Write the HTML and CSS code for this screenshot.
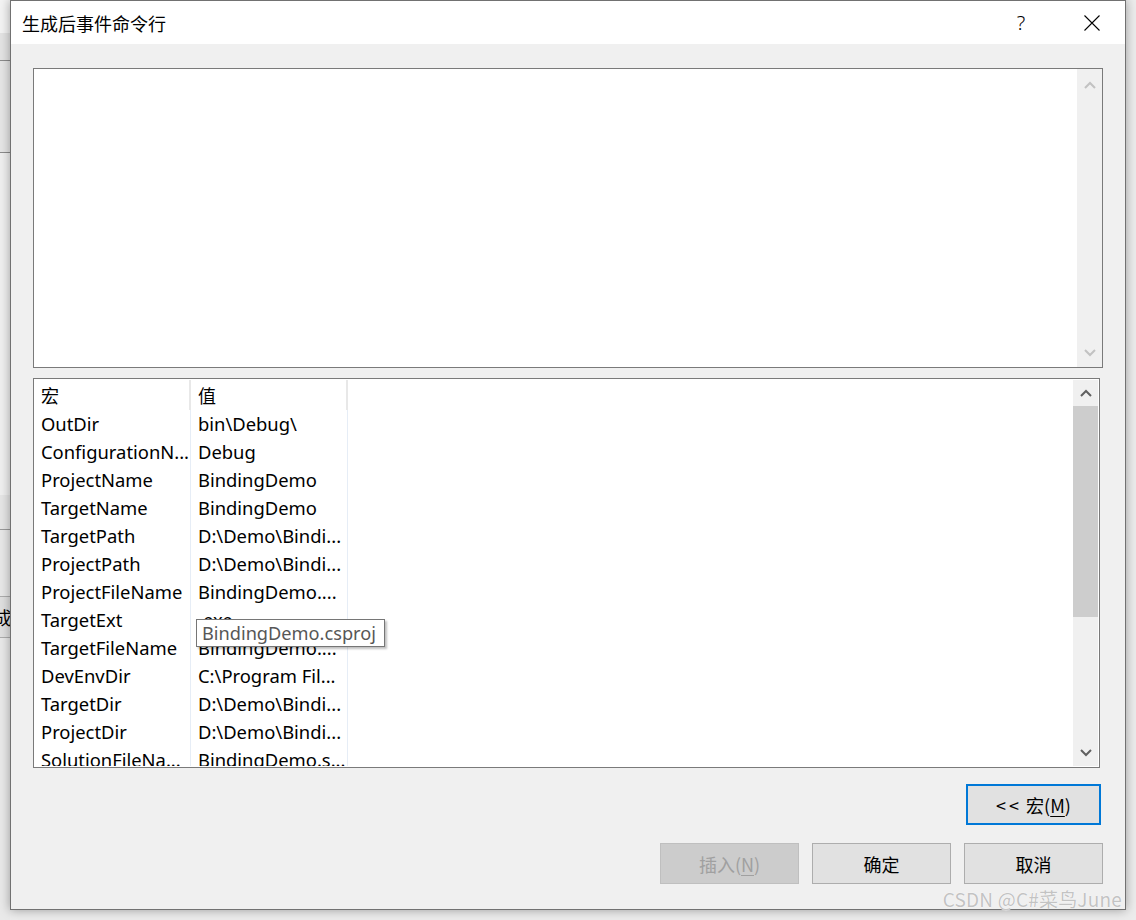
FILE: index.html
```html
<!DOCTYPE html>
<html>
<head>
<meta charset="utf-8">
<title>生成后事件命令行</title>
<link rel="stylesheet" href="styles.css">
</head>
<body>
<div class="screen">
  <div class="behind">
    <div class="b-top"></div>
    <div class="b-band"></div>
    <div class="b-panel"></div>
    <div class="b-mid"></div>
    <div class="b-band2"></div>
    <div class="b-gap"></div>
    <div class="b-btn"><span class="b-btn-text">成</span></div>
    <div class="b-rest"></div>
  </div>
  <div class="dialog">
    <div class="titlebar">
      <span class="title">生成后事件命令行</span>
      <span class="help">?</span>
      <span class="close"><svg width="16" height="16" viewBox="0 0 16 16"><path d="M0.5 0.5 L15.5 15.5 M15.5 0.5 L0.5 15.5" stroke="#000" stroke-width="1.1" fill="none"/></svg></span>
    </div>
    <div class="body">
      <div class="cmd">
        <div class="cmd-area"></div>
        <div class="vscroll off">
          <svg class="chev" width="12" height="8" viewBox="0 0 12 8"><polyline points="1,7 6,2 11,7" fill="none" stroke="#c2c2c2" stroke-width="2"/></svg>
          <div class="track"></div>
          <svg class="chev" width="12" height="8" viewBox="0 0 12 8"><polyline points="1,1 6,6 11,1" fill="none" stroke="#c2c2c2" stroke-width="2"/></svg>
        </div>
      </div>
      <div class="macros">
        <div class="table">
          <div class="row head"><div class="c1">宏</div><div class="c2">值</div></div>
          <div class="row"><div class="c1">OutDir</div><div class="c2">bin\Debug\</div></div>
          <div class="row"><div class="c1">ConfigurationN...</div><div class="c2">Debug</div></div>
          <div class="row"><div class="c1">ProjectName</div><div class="c2">BindingDemo</div></div>
          <div class="row"><div class="c1">TargetName</div><div class="c2">BindingDemo</div></div>
          <div class="row"><div class="c1">TargetPath</div><div class="c2">D:\Demo\Bindi...</div></div>
          <div class="row"><div class="c1">ProjectPath</div><div class="c2">D:\Demo\Bindi...</div></div>
          <div class="row"><div class="c1">ProjectFileName</div><div class="c2">BindingDemo....</div></div>
          <div class="row"><div class="c1">TargetExt</div><div class="c2">.exe</div></div>
          <div class="row"><div class="c1">TargetFileName</div><div class="c2">BindingDemo....</div></div>
          <div class="row"><div class="c1">DevEnvDir</div><div class="c2">C:\Program Fil...</div></div>
          <div class="row"><div class="c1">TargetDir</div><div class="c2">D:\Demo\Bindi...</div></div>
          <div class="row"><div class="c1">ProjectDir</div><div class="c2">D:\Demo\Bindi...</div></div>
          <div class="row"><div class="c1">SolutionFileNa...</div><div class="c2">BindingDemo.s...</div></div>
        </div>
        <div class="vscroll on">
          <div class="arrow"><svg width="12" height="8" viewBox="0 0 12 8"><polyline points="1,7 6,2 11,7" fill="none" stroke="#606060" stroke-width="2"/></svg></div>
          <div class="thumb"></div>
          <div class="track"></div>
          <div class="arrow"><svg width="12" height="8" viewBox="0 0 12 8"><polyline points="1,1 6,6 11,1" fill="none" stroke="#606060" stroke-width="2"/></svg></div>
        </div>
        <div class="tooltip">BindingDemo.csproj</div>
      </div>
      <div class="btnrow first">
        <button class="btn focus"><span class="lt">&lt;&lt;</span> 宏(<u>M</u>)</button>
      </div>
      <div class="btnrow second">
        <button class="btn disabled">插入(<u>N</u>)</button>
        <button class="btn">确定</button>
        <button class="btn">取消</button>
      </div>
    </div>
  </div>
  <div class="watermark">CSDN @C#菜鸟June</div>
</div>
</body>
</html>
```

FILE: styles.css
```css
* { box-sizing: border-box; }
html, body { margin: 0; padding: 0; }
body {
  width: 1136px;
  height: 920px;
  overflow: hidden;
  background: #ededed;
  font-family: "Noto Sans", "Noto Sans CJK SC", sans-serif;
}
.screen {
  position: relative;
  display: flex;
  width: 1136px;
  height: 920px;
  background: #ececec;
}
.behind {
  width: 10px;
  flex: none;
  display: flex;
  flex-direction: column;
  overflow: hidden;
}
.b-top { height: 33px; background: #f4f4f4; }
.b-band { height: 28px; background: #e4e4e4; border-bottom: 1px solid #8c8c8c; }
.b-panel { height: 92px; background: #e6e6e6; border-bottom: 1px solid #8c8c8c; }
.b-mid { height: 342px; background: #f0f0f0; }
.b-band2 { height: 35px; background: #e6e6e6; border-bottom: 1px solid #9a9a9a; }
.b-gap { height: 66px; background: #e8e8e8; }
.b-btn {
  height: 42px;
  background: #e0e0e0;
  border-top: 1px solid #adadad;
  border-bottom: 1px solid #adadad;
  display: flex;
  justify-content: flex-end;
  align-items: center;
  overflow: hidden;
}
.b-btn-text {
  font-family: "Noto Sans CJK SC", sans-serif;
  font-size: 18px;
  margin-right: -2px;
  color: #000;
  white-space: nowrap;
}
.b-rest { flex: 1; background: #e9e9e9; }

.dialog {
  width: 1116px;
  height: 910px;
  flex: none;
  border: 1px solid #717171;
  background: #f0f0f0;
  box-shadow: 0 0 10px rgba(0, 0, 0, 0.35);
  display: flex;
  flex-direction: column;
  position: relative;
  z-index: 1;
}
.titlebar {
  height: 43px;
  background: #fff;
  display: flex;
  align-items: center;
  padding-left: 11px;
  flex: none;
}
.title {
  font-family: "Noto Sans CJK SC", sans-serif;
  font-size: 18px;
  color: #000;
  flex: 1;
  line-height: 1;
}
.help {
  font-family: "Noto Sans", sans-serif;
  font-size: 20px;
  font-weight: 300;
  color: #000;
  width: 20px;
  text-align: center;
  margin-right: 53px;
  line-height: 1;
}
.close {
  display: flex;
  margin-right: 25px;
}
.body {
  flex: 1;
  padding: 24px 22px 0 22px;
  display: flex;
  flex-direction: column;
}
.cmd {
  height: 300px;
  border: 1px solid #7a7a7a;
  background: #fff;
  display: flex;
}
.cmd-area { flex: 1; }
.vscroll {
  width: 25px;
  background: #f0f0f0;
  display: flex;
  flex-direction: column;
  align-items: center;
}
.vscroll.off { padding: 12px 0 10px; }
.vscroll.off .track { flex: 1; }
.macros {
  position: relative;
  margin-top: 10px;
  width: 1067px;
  height: 390px;
  border: 1px solid #7a7a7a;
  padding: 1px;
  background: #fff;
  display: flex;
  overflow: hidden;
}
.table {
  flex: 1;
  overflow: hidden;
  font-size: 18.4px;
  color: #000;
}
.row {
  display: flex;
  height: 28px;
  line-height: 28px;
  white-space: nowrap;
}
.row.head { height: 30px; line-height: 30px; font-family: "Noto Sans CJK SC", sans-serif; font-size: 18px; }
.c1, .c2 {
  width: 157px;
  padding-left: 7px;
  border-right: 1px solid #e6edf6;
  overflow: hidden;
}
.c1 { width: 156px; padding-left: 6px; }
.head .c1, .head .c2 { border-right: 2px solid #e8e8e8; }
.vscroll.on { width: 25px; }
.vscroll.on .arrow {
  height: 26px;
  width: 100%;
  display: flex;
  align-items: center;
  justify-content: center;
}
.vscroll.on .thumb {
  width: 100%;
  height: 211px;
  background: #cdcdcd;
}
.vscroll.on .track { flex: 1; }
.tooltip {
  position: absolute;
  left: 162px;
  top: 240px;
  width: 189px;
  height: 28px;
  background: #fff;
  border: 1px solid #767676;
  box-shadow: 2px 2px 2px rgba(0, 0, 0, 0.25);
  color: #575757;
  font-size: 18.2px;
  line-height: 26px;
  padding-left: 5px;
  white-space: nowrap;
}
.btnrow {
  display: flex;
  justify-content: flex-end;
  gap: 13px;
}
.btnrow.first { margin-top: 16px; padding-right: 2px; }
.btnrow.second { margin-top: 18px; }
.btn {
  font-family: "Noto Sans CJK SC", sans-serif;
  font-size: 18px;
  width: 139px;
  height: 41px;
  background: #e1e1e1;
  border: 1px solid #adadad;
  color: #000;
  padding: 0;
  line-height: 1;
  border-radius: 0;
}
.btn .lt { letter-spacing: 3px; }
.btn u { text-underline-offset: 3px; text-decoration-thickness: 1px; }
.btn.focus { width: 135px; border: 2px solid #0078d7; }
.btn.disabled { background: #cccccc; border-color: #bfbfbf; color: #a0a0a0; }
.watermark {
  position: absolute;
  right: 14px;
  bottom: 8px;
  z-index: 2;
  font-family: "Noto Sans CJK SC", sans-serif;
  font-size: 19px;
  color: #c3c3c3;
  text-shadow: 0 0 1px #fff, 0 0 1px #fff;
  letter-spacing: 0.2px;
}
```
